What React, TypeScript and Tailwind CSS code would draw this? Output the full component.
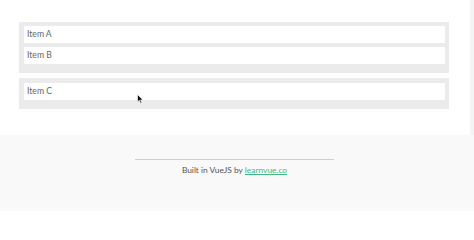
import React from "react";

function Item({ label }: { label: string }) {
  return (
    <div className="h-[17px] bg-white pl-[3px] flex items-center text-[8.6px] text-[#666] leading-none">
      {label}
    </div>
  );
}

export default function App() {
  return (
    <div
      className="relative w-[474px] h-[211px] bg-white overflow-hidden"
      style={{ fontFamily: "Lato, 'Noto Sans', sans-serif" }}
    >
      <div className="absolute right-0 top-0 w-[4px] h-[135px] bg-[#f4f4f4]" />
      <div className="h-[135px] pt-[22px] pl-[19px]">
        <div className="w-[430px] bg-[#ebebeb] pt-[4px] pb-[9px] pl-[5px] pr-[4px] flex flex-col gap-[4px]">
          <Item label="Item A" />
          <Item label="Item B" />
        </div>
        <div className="w-[430px] mt-[5px] bg-[#ebebeb] pt-[5px] pb-[9px] pl-[5px] pr-[4px] flex flex-col">
          <Item label="Item C" />
        </div>
      </div>
      <div className="h-[76px] bg-[#f9f9f9] pt-[24px] pr-[5px] flex flex-col items-center">
        <div className="w-[199px] h-px bg-[#cfcfcf]" />
        <div className="mt-[6px] text-[8.4px] text-[#555] leading-none">
          Built in VueJS by{" "}
          <a href="#" className="text-[#41b883] underline">
            learnvue.co
          </a>
        </div>
      </div>
      <svg
        className="absolute left-[137px] top-[94px]"
        width="7"
        height="10"
        viewBox="0 0 7 10"
      >
        <path d="M0.5 0.5 L0.5 8 L2.3 6.3 L3.6 9.3 L4.8 8.8 L3.6 5.9 L6 5.9 Z" fill="#111" stroke="#fff" strokeWidth="0.6" />
      </svg>
    </div>
  );
}
